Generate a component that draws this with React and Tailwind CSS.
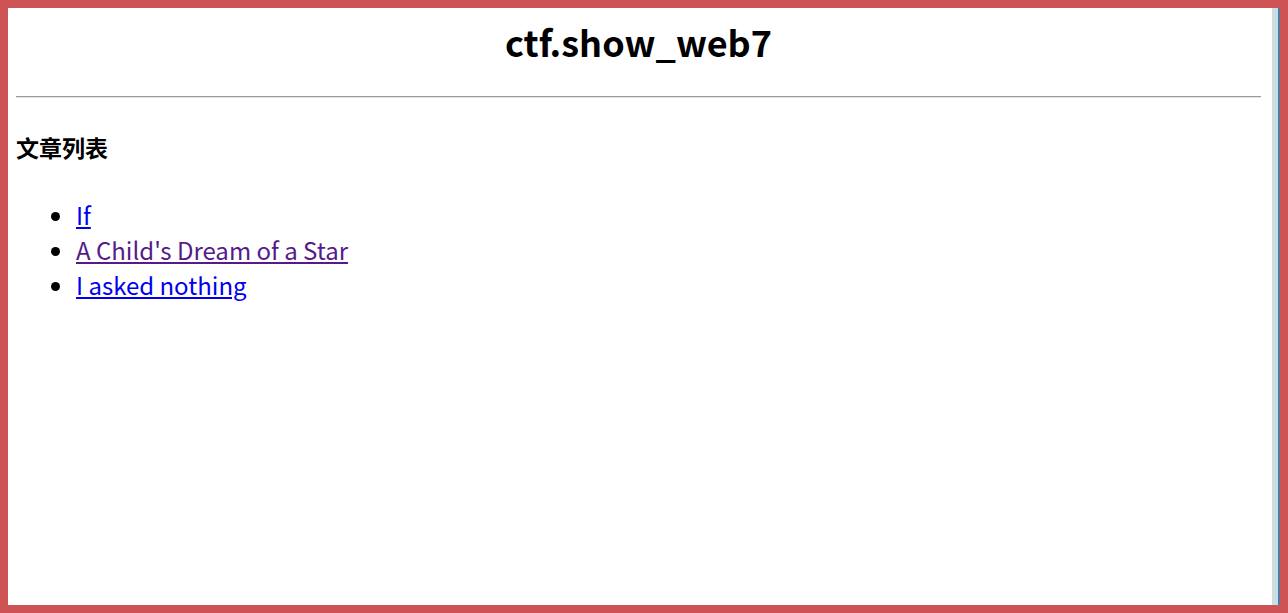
import React from 'react';

const posts = [
    { title: 'If', visited: false },
    { title: "A Child's Dream of a Star", visited: true },
    { title: 'I asked nothing', visited: false },
];

export default function App() {
    return (
        <div className="w-[1288px] h-[613px] bg-[#cd5354] p-2 overflow-hidden">
            <div className="flex h-full">
                {/* page */}
                <div
                    className="flex-1 bg-white pl-2 pr-[11px] text-black"
                    style={{ fontFamily: '"Noto Sans CJK SC", "Noto Sans", sans-serif' }}
                >
                    <h1 className="text-center font-bold text-[36px] leading-[46px] pt-[10px]">ctf.show_web7</h1>
                    <hr className="mt-[32px] border-0 border-t border-t-[#9a9a9a] border-b border-b-[#e4e4e4]" />
                    <h3 className="font-bold text-[23px] leading-[32px] mt-[33px]">文章列表</h3>
                    <ul className="list-disc pl-[60px] mt-[34px] text-[24px] leading-[35px]">
                        {posts.map((p) => (
                            <li key={p.title}>
                                <a
                                    href="#"
                                    className={`underline ${p.visited ? 'text-[#551a8b]' : 'text-[#0000ee]'}`}
                                >
                                    {p.title}
                                </a>
                            </li>
                        ))}
                    </ul>
                </div>
                {/* scrollbar strip */}
                <div className="flex w-2 h-full">
                    <div className="w-px bg-[#d9d9d9]" />
                    <div className="w-[5px] bg-[#c8e0e4]" />
                    <div className="w-[2px] bg-[#4f7ba6]" />
                </div>
            </div>
        </div>
    );
}
